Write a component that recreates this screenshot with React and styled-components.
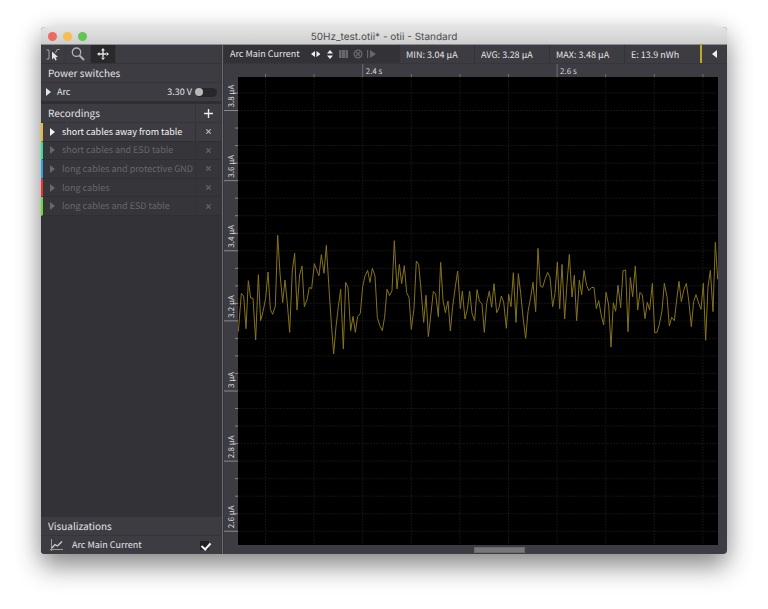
import React from "react";
import styled, { createGlobalStyle } from "styled-components";

const GlobalStyle = createGlobalStyle`
  * { box-sizing: border-box; }
  body {
    margin: 0;
    background: #fff;
    color: #e4e4e6;
    font-family: "Noto Sans CJK SC", "Noto Sans", sans-serif;
    font-size: 10px;
    line-height: 14px;
    text-rendering: geometricPrecision;
  }
  button, input { font: inherit; color: inherit; margin: 0; }
  button { padding: 0; border: 0; background: none; }
  h1, h2, ul { margin: 0; padding: 0; font-weight: 400; }
`;

const Page = styled.div`
  display: flex;
  height: 100vh;
  min-height: 400px;
  padding: 27px 41px 55px;
  overflow: hidden;
`;

const Window = styled.div`
  flex: 1;
  min-width: 0;
  display: flex;
  flex-direction: column;
  overflow: hidden;
  border-radius: 4px;
  background: #3c3c42;
  box-shadow: 0 13px 26px rgba(0, 0, 0, 0.42), 0 0 22px rgba(0, 0, 0, 0.12);
`;

const TitleBar = styled.header`
  display: grid;
  grid-template-columns: 60px 1fr 60px;
  align-items: center;
  height: 18px;
  flex: none;
  background: linear-gradient(#e4e4e4, #cecece);
  border-bottom: 1px solid #8c8c8e;
`;

const Lights = styled.div`
  display: flex;
  gap: 6px;
  padding-left: 7px;
`;

const Light = styled.button`
  width: 9px;
  height: 9px;
  border-radius: 50%;
  background: ${(p) => p.$color};
`;

const Title = styled.h1`
  text-align: center;
  color: #4c4c4c;
  font-family: Inter, sans-serif;
  font-size: 10px;
  line-height: 18px;
  padding-top: 1px;
  white-space: nowrap;
`;

const Body = styled.div`
  flex: 1;
  min-height: 0;
  display: flex;
`;

const Sidebar = styled.aside`
  flex: none;
  width: 180px;
  display: flex;
  flex-direction: column;
  background: #323237;
`;

const ToolRow = styled.div`
  display: flex;
  height: 19px;
  flex: none;
  background: #3c3c42;
  border-bottom: 1px solid #343438;
`;

const Tool = styled.button`
  width: 25px;
  display: grid;
  place-items: center;
  border-right: 1px solid #37373b;
  background: ${(p) => (p.$active ? "#29292b" : "transparent")};
`;

const SectionHeader = styled.div`
  display: flex;
  align-items: center;
  height: 19px;
  flex: none;
  padding-left: 7px;
  background: #3c3c42;
  border-bottom: 1px solid #35353a;
`;

const SectionTitle = styled.h2`
  flex: 1;
  font-size: 10px;
  line-height: 18px;
`;

const AddButton = styled.button`
  width: 26px;
  height: 18px;
  display: grid;
  place-items: center;
  border-left: 1px solid #35353a;
`;

const PowerRow = styled.div`
  display: flex;
  align-items: center;
  height: 18px;
  flex: none;
  padding: 0 4px;
  background: #3c3c42;
  font-size: 9px;
`;

const PowerName = styled.label`
  flex: 1;
  padding-left: 5px;
`;

const Switch = styled.input`
  appearance: none;
  display: flex;
  align-items: center;
  width: 22px;
  height: 9px;
  margin-left: 3px;
  border-radius: 5px;
  background: #28282a;
  &::before {
    content: "";
    width: 8px;
    height: 8px;
    border-radius: 50%;
    background: #b9b9bb;
  }
  &:checked { justify-content: flex-end; }
`;

const Gap = styled.div`
  height: 3px;
  flex: none;
  background: #2f2f33;
`;

const RecordingList = styled.ul`
  display: grid;
  grid-auto-rows: 1fr;
  height: 93px;
  flex: none;
  list-style: none;
`;

const Recording = styled.li`
  display: flex;
  align-items: center;
  border-left: 2px solid ${(p) => p.$color};
  border-bottom: 1px solid #303034;
  background: ${(p) => (p.$active ? "#3c3c42" : "#35353a")};
  color: ${(p) => (p.$active ? "#f4f4f4" : "#68686c")};
  font-size: 9px;
`;

const Expand = styled.button`
  width: 7px;
  height: 14px;
  display: grid;
  place-items: center;
`;

const RecordingExpand = styled(Expand)`
  width: 14px;
  padding-left: 4px;
`;

const RecordingName = styled.span`
  flex: 1;
  padding-left: 5px;
  white-space: nowrap;
`;

const RemoveButton = styled.button`
  width: 26px;
  align-self: stretch;
  display: grid;
  place-items: center;
  color: ${(p) => (p.$active ? "#bcbcbe" : "#68686c")};
  border-left: 1px solid #323236;
`;

const Spacer = styled.div`
  flex: 1;
`;

const VisualRow = styled.label`
  display: flex;
  align-items: center;
  gap: 9px;
  height: 18px;
  flex: none;
  padding: 0 12px 0 9px;
  background: #3c3c42;
  font-size: 9px;
  & > span { flex: 1; }
`;

const Tick = styled.input`
  appearance: none;
  width: 9px;
  height: 9px;
  background: #202022;
  position: relative;
  &:checked::after {
    content: "";
    position: absolute;
    left: 3px;
    top: 0;
    width: 4px;
    height: 7px;
    border: solid #f4f4f4;
    border-width: 0 2px 2px 0;
    transform: rotate(42deg);
  }
`;

const Divider = styled.div`
  flex: none;
  width: 3px;
  background: #6a6a6d;
  border: solid #36363a;
  border-width: 0 1px;
`;

const Main = styled.main`
  flex: 1;
  min-width: 0;
  display: flex;
  flex-direction: column;
`;

const TopBar = styled.div`
  display: flex;
  height: 19px;
  flex: none;
  background: #323237;
  border-bottom: 1px solid #37373b;
`;

const ChannelName = styled.div`
  flex: none;
  width: 86px;
  padding-left: 6px;
  font-size: 9px;
  line-height: 18px;
  white-space: nowrap;
`;

const ChannelTools = styled.div`
  flex: 1;
  display: flex;
  align-items: center;
  gap: 3px;
`;

const IconButton = styled.button`
  width: 11px;
  height: 12px;
  display: grid;
  place-items: center;
  color: ${(p) => (p.$dim ? "#68686c" : "#f0f0f0")};
`;

const Stat = styled.div`
  flex: none;
  width: 75px;
  padding-left: 6px;
  background: #3c3c42;
  border-right: 1px solid #343438;
  font-size: 9px;
  line-height: 19px;
  white-space: nowrap;
  &:last-of-type { border-right: 0; }
`;

const CollapseButton = styled.button`
  width: 27px;
  flex: none;
  display: grid;
  place-items: center;
  background: #3c3c42;
  border-left: 2px solid #c0a82c;
`;

const Graph = styled.div`
  flex: 1;
  min-height: 0;
  display: grid;
  grid-template-columns: 14px minmax(0, 1fr) 9px;
  grid-template-rows: 13px minmax(0, 1fr) 9px;
  & > svg { display: block; width: 100%; height: 100%; overflow: visible; }
  & text { fill: #dcdcde; font-size: 8px; }
`;

const Plot = styled.svg`
  background: #000;
`;

const ScrollTrack = styled.div`
  grid-column: 2;
  display: grid;
  grid-template-columns: 236fr 51fr 193fr;
  align-items: center;
`;

const ScrollThumb = styled.div`
  grid-column: 2;
  height: 6px;
  background: #78787a;
  border: 1px solid #6a6a6c;
`;

const recordings = [
  { name: "short cables away from table", color: "#e6bc28", active: true },
  { name: "short cables and ESD table", color: "#2fe08c" },
  { name: "long cables and protective GND", color: "#2f9fe8" },
  { name: "long cables", color: "#ee3030" },
  { name: "long cables and ESD table", color: "#62dd2c" },
];

const stats = ["MIN: 3.04 µA", "AVG: 3.28 µA", "MAX: 3.48 µA", "E: 13.9 nWh"];

const xTicks = Array.from({ length: 10 }, (_, i) => ({
  at: `${((27.5 + i * 48.6) / 480) * 100}%`,
  label: { 2: "2.4 s", 6: "2.6 s" }[i],
}));

const yLabels = ["3.8 µA", "3.6 µA", "3.4 µA", "3.2 µA", "3 µA", "2.8 µA", "2.6 µA"];
const yTicks = Array.from({ length: 26 }, (_, i) => ({
  at: `${((16 + i * 17.53) / 468) * 100}%`,
  label: i % 4 === 1 ? yLabels[(i - 1) / 4] : undefined,
}));

// Captured samples as x,y pairs, in blocks that each start at their own offset.
const blocks = [
  [0, "55,335 64,220 71,228 78,326 85,182 92,234 99,235 107,360 115,164 122,302 129,275 137,235 144,156 151,268 158,283 166,258 173,46 180,160 188,248 195,180 202,250 209,337 217,150 224,100 231,270 239,165 246,138 253,260 261,240 268,202 275,206 283,131 290,150 297,167 304,104 312,160 319,76 326,190 334,310 341,402 348,320 355,260"],
  [360, "2,208 10,387 17,187 24,202 32,332 39,289 46,337 53,290 61,280 68,200 75,168 83,151 90,187 97,145 105,168 112,292 119,316 127,332 134,290 141,208 149,227 156,212 163,62 171,207 178,133 185,191 193,137 200,218 207,232 214,328 222,265 229,123 236,133 244,220 251,307 258,226 265,350 273,280 280,214 287,222 295,290 302,127 309,240 316,278 324,243 331,333 338,260 346,200 353,153 361,266"],
  [720, "7,213 15,297 22,268 29,213 36,280 44,302 51,209 58,243 66,252 73,337 80,250 88,213 95,262 102,191 110,278 117,263 124,228 131,246 139,325 146,223 153,260 160,158 168,307 175,161 182,220 190,300 197,355 204,275 212,232 219,187 227,275 234,85 241,198 248,202 256,175 263,157 270,172 278,260 285,220 292,126 299,266 306,133 314,297 321,190 328,103 336,231 343,166 350,302 358,180 365,224"],
  [1080, "12,151 20,197 27,212 34,203 42,202 49,266 56,242 64,287 71,315 78,217 86,255 93,381 100,248 107,274 114,196 122,263 129,152 137,150 144,335 151,172 158,230 166,138 173,270 180,217 187,225 195,296 202,247 209,270 217,190 224,338 231,337 238,313 246,272 253,190 261,230 268,318 275,292 283,302 290,240 297,184 304,245 312,208 319,190 326,240 334,320 341,245 348,224 355,246 363,268 370,190 377,361 384,200 391,151 399,275 406,67 413,178"],
];

const tracePoints = blocks
  .map(([offset, text]) =>
    text
      .split(" ")
      .map((pair) => {
        const [x, y] = pair.split(",").map(Number);
        return `${x + offset},${y}`;
      })
      .join(" ")
  )
  .join(" ");

const Triangle = () => (
  <svg width="5" height="8" viewBox="0 0 5 8" fill="currentColor"><path d="M0 0 5 4 0 8z" /></svg>
);

const Cross = () => (
  <svg width="5" height="5" viewBox="0 0 5 5" fill="none" stroke="currentColor" strokeWidth="1.1"><path d="M.3.3 4.7 4.7M4.7.3.3 4.7" /></svg>
);

function SidebarPanel() {
  return (
    <Sidebar>
      <ToolRow>
        <Tool aria-label="Select">
          <svg width="14" height="13" viewBox="0 0 14 13" fill="none" stroke="#a4a4a7">
            <path d="M.5 2H3v9H.5M13.5 1.5H11L9.5 5" />
            <path d="M6 3.5v8l2-1.7 1.4 2.6 1.4-.7-1.3-2.5 2.5-.3z" fill="#e2e2e2" stroke="none" />
          </svg>
        </Tool>
        <Tool aria-label="Zoom">
          <svg width="14" height="14" viewBox="0 0 14 14" fill="none" stroke="#b2b2b5">
            <circle cx="5.5" cy="5.2" r="4.2" strokeWidth="1.3" />
            <path d="M8.5 8.5 13 13" strokeWidth="2" />
          </svg>
        </Tool>
        <Tool aria-label="Pan" $active>
          <svg width="12" height="12" viewBox="0 0 12 12" fill="#e2e2e2">
            <path d="M5.3 2h1.400v8H5.300zM2 5.300h8v1.400H2zM6 0l2 2.500H4zM6 12l2-2.500H4zM0 6l2.500-2v4zM12 6 9.500 4v4z" />
          </svg>
        </Tool>
      </ToolRow>
      <SectionHeader><SectionTitle>Power switches</SectionTitle></SectionHeader>
      <PowerRow>
        <Expand aria-label="Expand Arc"><Triangle /></Expand>
        <PowerName htmlFor="arc-power">Arc</PowerName>
        <span>3.30 V</span>
        <Switch id="arc-power" type="checkbox" role="switch" />
      </PowerRow>
      <Gap />
      <SectionHeader>
        <SectionTitle>Recordings</SectionTitle>
        <AddButton aria-label="Add recording">
          <svg width="9" height="9" viewBox="0 0 9 9" stroke="#ececec" strokeWidth="1.4"><path d="M4.500 0v9M0 4.500h9" /></svg>
        </AddButton>
      </SectionHeader>
      <RecordingList>
        {recordings.map((r) => (
          <Recording key={r.name} $color={r.color} $active={r.active}>
            <RecordingExpand aria-label={`Expand ${r.name}`}><Triangle /></RecordingExpand>
            <RecordingName>{r.name}</RecordingName>
            <RemoveButton aria-label={`Remove ${r.name}`} $active={r.active}><Cross /></RemoveButton>
          </Recording>
        ))}
      </RecordingList>
      <Spacer />
      <SectionHeader><SectionTitle>Visualizations</SectionTitle></SectionHeader>
      <VisualRow>
        <svg width="13" height="12" viewBox="0 0 13 12" fill="none" stroke="#9c9c9f">
          <path d="M1.500 0v12M0 10.500h13" />
          <path d="m2 9 3-3.500 2.500 1.500L12 2.500" stroke="#d0d0d2" strokeWidth="1.300" />
        </svg>
        <span>Arc Main Current</span>
        <Tick type="checkbox" defaultChecked />
      </VisualRow>
    </Sidebar>
  );
}

function ChannelBar() {
  return (
    <TopBar>
      <ChannelName>Arc Main Current</ChannelName>
      <ChannelTools>
        <IconButton aria-label="Fit width">
          <svg width="9" height="6" viewBox="0 0 9 6" fill="currentColor"><path d="M4 0v6L0 3zM5.500 0v6l4-3z" /></svg>
        </IconButton>
        <IconButton aria-label="Fit height">
          <svg width="6" height="9" viewBox="0 0 6 9" fill="currentColor"><path d="M0 3.500h6L3 0zM0 5.500h6L3 9z" /></svg>
        </IconButton>
        <IconButton aria-label="Columns" $dim>
          <svg width="9" height="8" viewBox="0 0 9 8" fill="currentColor"><path d="M0 0h2v8H0zM2.500 0h4v8h-4zM7 0h2v8H7z" /></svg>
        </IconButton>
        <IconButton aria-label="Clear" $dim>
          <svg width="10" height="10" viewBox="0 0 10 10" fill="none" stroke="currentColor" strokeWidth="1.300"><circle cx="5" cy="5" r="3.900" /><path d="m2.500 2.500 5 5m0-5-5 5" /></svg>
        </IconButton>
        <IconButton aria-label="Next" $dim>
          <svg width="9" height="8" viewBox="0 0 9 8" fill="currentColor"><path d="M0 0h1.200v8H0zM3 0l6 4-6 4z" /></svg>
        </IconButton>
      </ChannelTools>
      {stats.map((s) => <Stat key={s}>{s}</Stat>)}
      <CollapseButton aria-label="Collapse">
        <svg width="5" height="8" viewBox="0 0 5 8" fill="#f0f0f0"><path d="M5 0 0 4l5 4z" /></svg>
      </CollapseButton>
    </TopBar>
  );
}

function GraphArea() {
  return (
    <Graph>
      <span />
      <svg>
        {xTicks.map((t) => (
          <React.Fragment key={t.at}>
            <line x1={t.at} x2={t.at} y1={t.label ? "0" : "10"} y2="13" stroke="#707073" />
            {t.label && <text x={t.at} y="10" dx="3">{t.label}</text>}
          </React.Fragment>
        ))}
      </svg>
      <span />
      <svg>
        {yTicks.map((t) => (
          <React.Fragment key={t.at}>
            <line y1={t.at} y2={t.at} x1={t.label ? "0" : "11"} x2="14" stroke="#8a8a8d" />
            {t.label && (
              <svg x="10" y={t.at} overflow="visible">
                <text transform="rotate(-90)" x="3">{t.label}</text>
              </svg>
            )}
          </React.Fragment>
        ))}
      </svg>
      <Plot role="img" aria-label="Current over time">
        <g stroke="#141414" strokeDasharray="2 1">
          {xTicks.map((t) => <line key={t.at} x1={t.at} x2={t.at} y1="0" y2="100%" />)}
          {yTicks.map((t) => <line key={t.at} y1={t.at} y2={t.at} x1="0" x2="100%" />)}
        </g>
        <svg width="100%" height="100%" viewBox="54 -429 1440 1404" preserveAspectRatio="none">
          <polyline points={tracePoints} fill="none" stroke="#86741a" strokeWidth="1" vectorEffect="non-scaling-stroke" />
        </svg>
      </Plot>
      <span />
      <ScrollTrack><ScrollThumb /></ScrollTrack>
    </Graph>
  );
}

export default function App() {
  return (
    <Page>
      <GlobalStyle />
      <Window>
        <TitleBar>
          <Lights>
            <Light $color="#ed6a5e" aria-label="Close" />
            <Light $color="#f5bf4f" aria-label="Minimize" />
            <Light $color="#61c554" aria-label="Maximize" />
          </Lights>
          <Title>50Hz_test.otii* - otii - Standard</Title>
        </TitleBar>
        <Body>
          <SidebarPanel />
          <Divider />
          <Main>
            <ChannelBar />
            <GraphArea />
          </Main>
        </Body>
      </Window>
    </Page>
  );
}
